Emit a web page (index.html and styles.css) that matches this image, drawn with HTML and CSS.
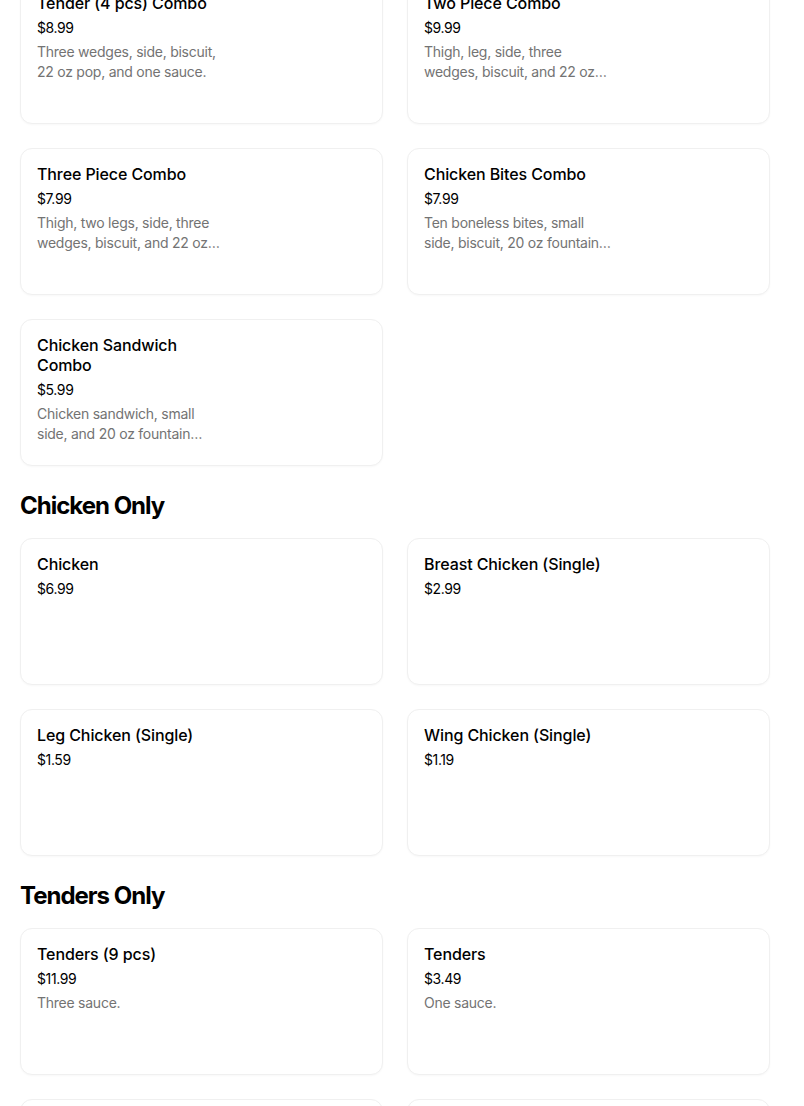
FILE: index.html
```html
<!DOCTYPE html>
<html lang="en">
<head>
<meta charset="utf-8">
<title>Menu</title>
<link rel="stylesheet" href="styles.css">
</head>
<body>
<main class="menu">
  <section class="section section-first">
    <div class="grid">
      <div class="card">
        <div class="info">
          <div class="title">Tender (4 pcs) Combo</div>
          <div class="price">$8.99</div>
          <div class="desc">Three wedges, side, biscuit,<br>22 oz pop, and one sauce.</div>
        </div>
      </div>
      <div class="card">
        <div class="info">
          <div class="title">Two Piece Combo</div>
          <div class="price">$9.99</div>
          <div class="desc">Thigh, leg, side, three<br>wedges, biscuit, and 22 oz…</div>
        </div>
      </div>
      <div class="card">
        <div class="info">
          <div class="title">Three Piece Combo</div>
          <div class="price">$7.99</div>
          <div class="desc">Thigh, two legs, side, three<br>wedges, biscuit, and 22 oz…</div>
        </div>
      </div>
      <div class="card">
        <div class="info">
          <div class="title">Chicken Bites Combo</div>
          <div class="price">$7.99</div>
          <div class="desc">Ten boneless bites, small<br>side, biscuit, 20 oz fountain…</div>
        </div>
      </div>
      <div class="card">
        <div class="info">
          <div class="title">Chicken Sandwich<br>Combo</div>
          <div class="price">$5.99</div>
          <div class="desc">Chicken sandwich, small<br>side, and 20 oz fountain…</div>
        </div>
      </div>
    </div>
  </section>

  <section class="section">
    <h2 class="heading">Chicken Only</h2>
    <div class="grid">
      <div class="card">
        <div class="info">
          <div class="title">Chicken</div>
          <div class="price">$6.99</div>
        </div>
      </div>
      <div class="card">
        <div class="info">
          <div class="title">Breast Chicken (Single)</div>
          <div class="price">$2.99</div>
        </div>
      </div>
      <div class="card">
        <div class="info">
          <div class="title">Leg Chicken (Single)</div>
          <div class="price">$1.59</div>
        </div>
      </div>
      <div class="card">
        <div class="info">
          <div class="title">Wing Chicken (Single)</div>
          <div class="price">$1.19</div>
        </div>
      </div>
    </div>
  </section>

  <section class="section">
    <h2 class="heading">Tenders Only</h2>
    <div class="grid">
      <div class="card">
        <div class="info">
          <div class="title">Tenders (9 pcs)</div>
          <div class="price">$11.99</div>
          <div class="desc">Three sauce.</div>
        </div>
      </div>
      <div class="card">
        <div class="info">
          <div class="title">Tenders</div>
          <div class="price">$3.49</div>
          <div class="desc">One sauce.</div>
        </div>
      </div>
      <div class="card"></div>
      <div class="card"></div>
    </div>
  </section>
</main>
</body>
</html>
```

FILE: styles.css
```css
* {
  box-sizing: border-box;
}

html, body {
  margin: 0;
  padding: 0;
  background: #ffffff;
}

body {
  font-family: Inter, "Noto Sans", "Liberation Sans", sans-serif;
  color: #000000;
  overflow: hidden;
}

.menu {
  width: 750px;
  margin: -23px 0 0 20px;
}

.section {
  margin-top: 24px;
}

.section-first {
  margin-top: 0;
}

.heading {
  margin: 0 0 16px 0;
  font-size: 24px;
  line-height: 32px;
  font-weight: 700;
  letter-spacing: -1px;
  color: #000000;
}

.grid {
  display: grid;
  grid-template-columns: 1fr 1fr;
  gap: 24px;
}

.card {
  height: 147px;
  border: 1px solid #f0f0f0;
  border-radius: 12px;
  box-shadow: 0 1px 2px rgba(0, 0, 0, 0.03);
  padding: 15px 16px 16px 16px;
  background: #ffffff;
}

.info {
  width: 200px;
  display: flex;
  flex-direction: column;
  gap: 4px;
}

.title {
  font-size: 16px;
  line-height: 20px;
  font-weight: 500;
  letter-spacing: -0.1px;
  color: #000000;
  margin-bottom: 1px;
}

.price {
  font-size: 14px;
  line-height: 20px;
  font-weight: 400;
  color: #000000;
  letter-spacing: -0.4px;
}

.desc {
  font-size: 14px;
  line-height: 20px;
  font-weight: 400;
  letter-spacing: -0.25px;
  color: #737373;
  white-space: nowrap;
}
```
